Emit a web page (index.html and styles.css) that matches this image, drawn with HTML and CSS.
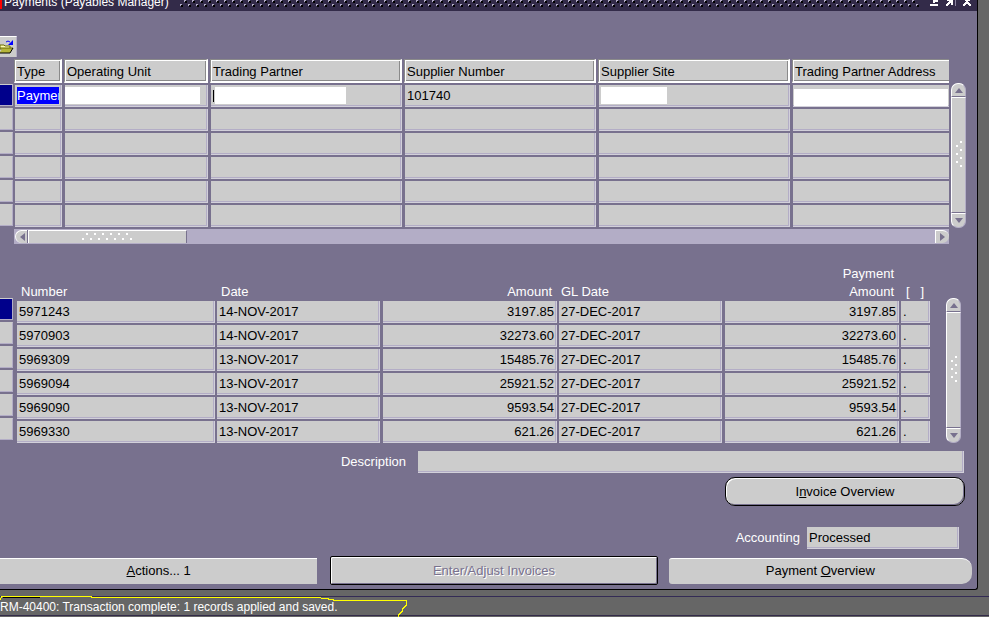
FILE: index.html
```html
<!DOCTYPE html>
<html lang="en">
<head>
  <meta charset="UTF-8">
  <title>Payments (Payables Manager)</title>
  <meta name="viewport" content="width=device-width, initial-scale=1.0">
  <link rel="stylesheet" href="styles.css">
</head>
<body>
  <div class="window">
    <header class="titlebar">
      <span class="app-icon"></span>
      <h1 class="title">Payments (Payables Manager)</h1>
      <svg class="title-dots" aria-hidden="true">
        <defs>
          <pattern id="dots" width="8" height="8" patternUnits="userSpaceOnUse" shape-rendering="crispEdges">
            <path d="M2 5h2v2H2zM6 1h2v2H6z" fill="#000"/>
            <path d="M1 4h2v2H1zM5 0h2v2H5z" fill="#b3adc6"/>
            <path d="M2 5h1v1H2zM6 1h1v1H6z" fill="#000"/>
          </pattern>
        </defs>
        <rect width="100%" height="7" fill="url(#dots)"/>
      </svg>
      <svg class="title-icons" width="46" height="11" viewBox="0 0 46 11" shape-rendering="crispEdges" aria-hidden="true">
        <path d="M3 5h8M7 1h4M7 0v3" stroke="#fff" stroke-width="2" fill="none"/>
        <path d="M20 0h5v5M25 0l-6 6" stroke="#fff" stroke-width="2" fill="none"/>
        <path d="M28 0v6" stroke="#8b84a0"/>
        <path d="M36 6l4-4 4 4M38 0h5" stroke="#fff" stroke-width="2" fill="none"/>
      </svg>
    </header>

    <div class="toolbar">
      <button class="tool" aria-label="Open folder">
        <svg width="16" height="20" viewBox="0 0 16 20" aria-hidden="true">
          <path d="M0 8h4l1 1h5v3H0z" fill="#ffffb0" stroke="#6b6b00"/>
          <path d="M0 15l3-4h10l-3 5H0z" fill="#b5b53a"/>
          <path d="M0 11h3M3 11h10" stroke="#6b6b00" fill="none"/>
          <path d="M0 16h10l3-5" stroke="#000" fill="none"/>
          <path d="M6 5q2-2 4 0" stroke="#00f" fill="none"/>
          <path d="M13 3v5H8z" fill="#00f"/>
        </svg>
      </button>
    </div>

    <section class="block payments">
      <div class="selectors">
        <button class="selector current" aria-label="Payment 1"></button>
        <button class="selector" aria-label="Payment 2"></button>
        <button class="selector" aria-label="Payment 3"></button>
        <button class="selector" aria-label="Payment 4"></button>
        <button class="selector" aria-label="Payment 5"></button>
        <button class="selector" aria-label="Payment 6"></button>
      </div>
      <div class="grid">
        <table class="payment-table">
          <colgroup>
            <col class="c-type"><col class="c-unit"><col class="c-wide"><col class="c-wide"><col class="c-wide"><col>
          </colgroup>
          <thead>
            <tr>
              <th><div class="head">Type</div></th>
              <th><div class="head">Operating Unit</div></th>
              <th><div class="head">Trading Partner</div></th>
              <th><div class="head">Supplier Number</div></th>
              <th><div class="head">Supplier Site</div></th>
              <th class="cut"><div class="head">Trading Partner Address</div></th>
            </tr>
          </thead>
          <tbody>
            <tr>
              <td><div class="cell"><span class="marked">Payment</span></div></td>
              <td><div class="cell"><span class="blank blank-unit"></span></div></td>
              <td><div class="cell"><span class="caret"></span><span class="blank blank-partner"></span></div></td>
              <td><div class="cell">101740</div></td>
              <td><div class="cell"><span class="blank blank-site"></span></div></td>
              <td class="cut"><div class="cell"><span class="blank blank-address"></span></div></td>
            </tr>
            <tr><td><div class="cell"></div></td><td><div class="cell"></div></td><td><div class="cell"></div></td><td><div class="cell"></div></td><td><div class="cell"></div></td><td class="cut"><div class="cell"></div></td></tr>
            <tr><td><div class="cell"></div></td><td><div class="cell"></div></td><td><div class="cell"></div></td><td><div class="cell"></div></td><td><div class="cell"></div></td><td class="cut"><div class="cell"></div></td></tr>
            <tr><td><div class="cell"></div></td><td><div class="cell"></div></td><td><div class="cell"></div></td><td><div class="cell"></div></td><td><div class="cell"></div></td><td class="cut"><div class="cell"></div></td></tr>
            <tr><td><div class="cell"></div></td><td><div class="cell"></div></td><td><div class="cell"></div></td><td><div class="cell"></div></td><td><div class="cell"></div></td><td class="cut"><div class="cell"></div></td></tr>
            <tr><td><div class="cell"></div></td><td><div class="cell"></div></td><td><div class="cell"></div></td><td><div class="cell"></div></td><td><div class="cell"></div></td><td class="cut"><div class="cell"></div></td></tr>
          </tbody>
        </table>
        <div class="hscroll">
          <button class="arrow arrow-left" aria-label="Scroll left"><svg width="5" height="8" viewBox="0 0 5 8"><path d="M5 0v8L0 4z"/></svg></button>
          <div class="hthumb">
            <svg width="52" height="8" viewBox="0 0 52 8" fill="#fff" aria-hidden="true"><path d="M5 0h2v2H5zM13 0h2v2h-2zM21 0h2v2h-2zM29 0h2v2h-2zM37 0h2v2h-2zM45 0h2v2h-2zM1 5h2v2H1zM9 5h2v2H9zM17 5h2v2h-2zM25 5h2v2h-2zM33 5h2v2h-2zM41 5h2v2h-2zM49 5h2v2h-2z"/></svg>
          </div>
          <button class="arrow arrow-right" aria-label="Scroll right"><svg width="5" height="8" viewBox="0 0 5 8"><path d="M0 0v8l5-4z"/></svg></button>
        </div>
      </div>
      <div class="vscroll">
        <button class="arrow arrow-up" aria-label="Scroll payments up"><svg width="8" height="5" viewBox="0 0 8 5"><path d="M0 5h8L4 0z"/></svg></button>
        <div class="vthumb">
          <svg width="8" height="28" viewBox="0 0 8 28" fill="#fff" aria-hidden="true"><path d="M5 0h2v2H5zM5 8h2v2H5zM5 16h2v2H5zM5 24h2v2H5zM1 4h2v2H1zM1 12h2v2H1zM1 20h2v2H1z"/></svg>
        </div>
        <button class="arrow arrow-down" aria-label="Scroll payments down"><svg width="8" height="5" viewBox="0 0 8 5"><path d="M0 0h8L4 5z"/></svg></button>
      </div>
    </section>

    <section class="block invoices">
      <div class="selectors">
        <button class="selector current" aria-label="Invoice 1"></button>
        <button class="selector" aria-label="Invoice 2"></button>
        <button class="selector" aria-label="Invoice 3"></button>
        <button class="selector" aria-label="Invoice 4"></button>
        <button class="selector" aria-label="Invoice 5"></button>
        <button class="selector" aria-label="Invoice 6"></button>
      </div>
      <div class="grid">
        <table class="invoice-table">
          <colgroup>
            <col class="c-number"><col class="c-date"><col class="c-amount"><col class="c-date"><col class="c-amount"><col>
          </colgroup>
          <thead>
            <tr>
              <th>Number</th>
              <th>Date</th>
              <th class="num">Amount</th>
              <th class="gl">GL Date</th>
              <th class="num">Payment<br>Amount</th>
              <th class="flex-head">[ &nbsp;&nbsp;]</th>
            </tr>
          </thead>
          <tbody>
            <tr><td><div class="cell">5971243</div></td><td><div class="cell">14-NOV-2017</div></td><td><div class="cell num">3197.85</div></td><td><div class="cell">27-DEC-2017</div></td><td><div class="cell num">3197.85</div></td><td><div class="cell">.</div></td></tr>
            <tr><td><div class="cell">5970903</div></td><td><div class="cell">14-NOV-2017</div></td><td><div class="cell num">32273.60</div></td><td><div class="cell">27-DEC-2017</div></td><td><div class="cell num">32273.60</div></td><td><div class="cell">.</div></td></tr>
            <tr><td><div class="cell">5969309</div></td><td><div class="cell">13-NOV-2017</div></td><td><div class="cell num">15485.76</div></td><td><div class="cell">27-DEC-2017</div></td><td><div class="cell num">15485.76</div></td><td><div class="cell">.</div></td></tr>
            <tr><td><div class="cell">5969094</div></td><td><div class="cell">13-NOV-2017</div></td><td><div class="cell num">25921.52</div></td><td><div class="cell">27-DEC-2017</div></td><td><div class="cell num">25921.52</div></td><td><div class="cell">.</div></td></tr>
            <tr><td><div class="cell">5969090</div></td><td><div class="cell">13-NOV-2017</div></td><td><div class="cell num">9593.54</div></td><td><div class="cell">27-DEC-2017</div></td><td><div class="cell num">9593.54</div></td><td><div class="cell">.</div></td></tr>
            <tr><td><div class="cell">5969330</div></td><td><div class="cell">13-NOV-2017</div></td><td><div class="cell num">621.26</div></td><td><div class="cell">27-DEC-2017</div></td><td><div class="cell num">621.26</div></td><td><div class="cell">.</div></td></tr>
          </tbody>
        </table>
      </div>
      <div class="vscroll">
        <button class="arrow arrow-up" aria-label="Scroll invoices up"><svg width="8" height="5" viewBox="0 0 8 5"><path d="M0 5h8L4 0z"/></svg></button>
        <div class="vthumb">
          <svg width="8" height="28" viewBox="0 0 8 28" fill="#fff" aria-hidden="true"><path d="M5 0h2v2H5zM5 8h2v2H5zM5 16h2v2H5zM5 24h2v2H5zM1 4h2v2H1zM1 12h2v2H1zM1 20h2v2H1z"/></svg>
        </div>
        <button class="arrow arrow-down" aria-label="Scroll invoices down"><svg width="8" height="5" viewBox="0 0 8 5"><path d="M0 0h8L4 5z"/></svg></button>
      </div>
    </section>

    <div class="field description">
      <label for="description">Description</label>
      <input class="text" id="description" type="text">
    </div>
    <div class="overview">
      <button class="button round">I<u>n</u>voice Overview</button>
    </div>
    <div class="field accounting">
      <label for="accounting">Accounting</label>
      <input class="text" id="accounting" type="text" value="Processed">
    </div>
    <div class="actions">
      <button class="button action-menu"><u>A</u>ctions... 1</button>
      <button class="button adjust" disabled>Enter/Adjust Invoices</button>
      <button class="button payment">Payment <u>O</u>verview</button>
    </div>
  </div>

  <footer class="status">
    <p class="message">RM-40400: Transaction complete: 1 records applied and saved.</p>
    <!-- hand-drawn highlight round the message -->
    <svg class="marker" width="410" height="22" viewBox="0 0 410 22" shape-rendering="crispEdges" aria-hidden="true">
      <path d="M3 2.5h37" stroke="#000"/>
      <path d="M0 4.5l2-3h89v1h224l11 1 10 2h70v5l-4 4v2l-4 4v3" fill="none" stroke="#ff0"/>
    </svg>
  </footer>
</body>
</html>
```

FILE: styles.css
```css
* {
  margin: 0; padding: 0; box-sizing: border-box;
}
body {
  display: flex; flex-direction: column;
  min-height: 100vh; overflow: hidden;
  background: #666; color: #000;
  font: 13px/16px "Liberation Sans", Arial, sans-serif;
}
button, input { font: inherit; color: inherit; }
button { cursor: pointer; }
svg { display: block; }

.window {
  margin-right: 11px; padding-bottom: 4px;
  background: #78718e;
  border-right: 1px solid #000; border-bottom: 1px solid #000;
  border-bottom-right-radius: 3px;
}

/* title bar */
.titlebar {
  display: flex; align-items: flex-start;
  height: 11px; overflow: hidden;
  background: #332b49; color: #fff;
}
.app-icon { width: 2px; height: 9px; background: #f00; }
.title {
  margin: -6px 10px 0 2px;
  font-size: 12px; font-weight: normal; white-space: nowrap;
}
.title-dots { flex: 1; min-width: 0; height: 8px; }
.title-icons { margin: 0 4px 0 7px; }

.toolbar { padding-top: 25px; }
.tool {
  display: block; width: 17px; height: 21px;
  background: #ccc; border: 0;
  border-top: 1px solid #fff; border-right: 1px solid #b3adc6;
}

/* record blocks */
.block { display: flex; align-items: flex-start; }
.payments { padding: 2px 11px 0 0; }
.invoices { padding: 21px 16px 0 0; }
.selectors { display: flex; flex-direction: column; gap: 2px; width: 13px; }
.payments .selectors { margin: 25px 1px 0 0; }
.invoices .selectors { margin: 33px 4px 0 0; }
.selector {
  height: 22px;
  background: #ccc; border: 1px solid #b3adc6; border-left: 0;
  border-top-color: #ccc;
}
.selector.current { background: #00008b; }
.grid { flex: 1; min-width: 0; }

table { width: 100%; table-layout: fixed; border-collapse: collapse; }
th { font-weight: normal; text-align: left; white-space: nowrap; }
.c-type { width: 50px; }
.c-unit { width: 146px; }
.c-wide { width: 194px; }
.c-number { width: 200px; }
.c-date { width: 165px; }
.c-amount { width: 177px; }

.payment-table th { height: 25px; padding: 0 2px 1px 0; }
.payment-table td { height: 24px; padding: 1px 2px 1px 1px; }
.payment-table .cut { padding-right: 0; }
.head {
  height: 24px; padding: 4px 0 0 2px;
  background: #ccc;
  border: 1px solid #8a8a8a; border-width: 1px 2px 2px 1px;
  border-right-color: #fff; border-bottom-color: #fff;
  box-shadow: inset 1px 1px #fff, inset -1px -1px #8a8a8a;
}
.cut .head { border-right: 0; box-shadow: inset 1px 1px #fff, inset 0 -1px #8a8a8a; }
.cell {
  display: flex; align-items: center;
  height: 22px; padding: 0 2px; overflow: hidden;
  background: #ccc; white-space: nowrap;
  border: solid #d2d0da; border-width: 0 1px 1px 0;
  box-shadow: inset -1px -1px #b3adc6;
}
.cut .cell { padding-right: 0; border-right: 0; box-shadow: inset 0 -1px #b3adc6; }
.cell.num { justify-content: flex-end; }
.marked { overflow: hidden; background: #00f; color: #fff; line-height: 17px; }
.caret { width: 1px; height: 12px; margin-right: 1px; background: #000; }
.blank { flex: none; height: 17px; background: #fff; }
.blank-unit { width: 98%; margin-left: -2px; }
.blank-partner { width: 131px; }
.blank-site { width: 66px; }
.blank-address { align-self: flex-end; width: 100%; margin-left: -1px; }

.invoice-table th { height: 36px; padding: 0 0 0 4px; vertical-align: bottom; color: #fff; line-height: 18px; }
.invoice-table td { height: 24px; padding: 0 2px 2px 0; }
.invoice-table th.num { padding: 0 7px 0 0; text-align: right; }
.invoice-table th.gl { padding-left: 2px; }
.invoice-table th.flex-head { padding-left: 5px; }
.invoice-table td:nth-child(3), .invoice-table td:nth-child(5) { padding-left: 1px; }

/* scrollbars */
.arrow {
  display: flex; align-items: center; justify-content: center; flex: none;
  background: #ccc; border: 1px solid #fff;
}
.arrow svg { fill: #78718e; }
.hscroll {
  display: flex; height: 15px; margin-top: 1px; padding: 1px 0 1px 1px;
  background: #b3adc6;
}
.arrow-left { width: 13px; border-radius: 7px 0 0 7px; border-width: 1px 0 0 1px; }
.arrow-right { width: 14px; margin-left: auto; border-radius: 0 7px 7px 0; border-width: 1px 0 0 1px; }
.hthumb {
  display: flex; align-items: center; justify-content: center;
  width: 17%; background: #ccc;
  border: solid #fff; border-width: 1px 1px 0 1px;
  border-right-color: #78718e;
  box-shadow: -1px 0 #78718e;
}
.vscroll {
  display: flex; flex-direction: column;
  width: 15px; height: 145px;
}
.payments .vscroll { margin: 24px 0 0 2px; }
.invoices .vscroll { margin: 33px 0 0 14px; }
.arrow-up { height: 14px; border-radius: 7px 7px 0 0; border-color: #fff #b3adc6 #78718e #fff; }
.arrow-down { height: 15px; border-radius: 0 0 7px 7px; border-color: #fff #b3adc6 #b3adc6 #fff; }
.vthumb {
  flex: 1; display: flex; align-items: center; justify-content: center;
  background: #ccc;
  border: 1px solid #fff; border-right-color: #b3adc6; border-bottom-color: #78718e;
}

/* fields and buttons */
.field { display: flex; align-items: center; justify-content: flex-end; }
.field label { color: #fff; }
.text {
  height: 22px; padding: 0 2px 1px 2px;
  background: #ccc; border: 0; outline: 0;
  border-right: 1px solid #d2d0da; border-bottom: 1px solid #d2d0da;
  box-shadow: inset -1px -1px #b3adc6;
}
.description { gap: 12px; padding: 6px 13px 0 0; }
.description .text { width: 546px; max-width: 60%; }
.accounting { gap: 7px; padding: 21px 18px 0 0; }
.accounting .text { width: 152px; }
.overview { display: flex; justify-content: flex-end; padding: 4px 12px 0 0; }
.button {
  height: 26px;
  background: #ccc; border: 0; border-top: 1px solid #fff;
}
.button.round {
  width: 240px; height: 29px;
  border: 1px solid #000; border-radius: 10px;
  box-shadow: inset 1px 1px #fff, inset -1px -1px #78718e;
}
.actions { display: flex; align-items: center; padding: 7px 5px 0 0; }
.action-menu { flex: 318; margin-right: 13px; }
.adjust {
  flex: 326; height: 29px; margin-right: 11px;
  border: 1px solid #000; border-radius: 2px;
  box-shadow: inset 1px 1px #fff, inset -1px -1px #78718e;
  color: #78718e; text-shadow: 1px 1px #fff;
  cursor: default;
}
.payment { flex: 304; border-radius: 3px 10px 10px 3px; }

/* message line */
.status {
  position: relative;
  height: 20px; margin-top: 6px; padding-top: 2px;
  border-top: 1px solid #332b55; border-bottom: 1px solid #332b49;
  color: #fff; font-size: 12px;
}
.marker { position: absolute; left: 0; top: -2px; }
```
